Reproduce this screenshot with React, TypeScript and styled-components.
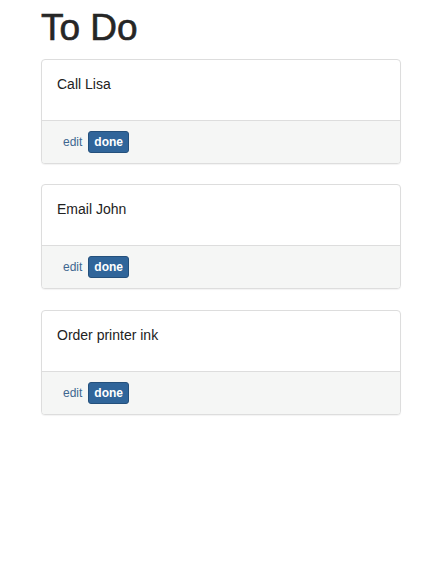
import styled, { createGlobalStyle } from "styled-components";

const GlobalStyle = createGlobalStyle`
  html, body {
    margin: 0;
    padding: 0;
    background: #ffffff;
    font-family: "Liberation Sans", Arial, sans-serif;
    font-size: 14px;
    line-height: 1.42857;
    color: #333333;
  }
`;

const Page = styled.div`
  padding: 0 45px 0 41px;
`;

const Title = styled.h1`
  font-size: 37px;
  font-weight: 400;
  line-height: 1.1;
  margin: 8px 0 10px;
  color: #262626;
  -webkit-text-stroke: 0.6px #262626;
`;

const Panel = styled.div`
  width: 360px;
  box-sizing: border-box;
  margin-bottom: 20.5px;
  background: #ffffff;
  border: 1px solid #dddddd;
  border-radius: 4px;
  box-shadow: 0 1px 1px rgba(0, 0, 0, 0.05);
`;

const PanelBody = styled.div`
  padding: 15px;
`;

const TaskText = styled.p`
  margin: 0 0 10px;
  color: #222222;
`;

const PanelFooter = styled.div`
  display: flex;
  align-items: center;
  padding: 10px 15px;
  background: #f5f6f5;
  border-top: 1px solid #dddddd;
  border-radius: 0 0 3px 3px;
`;

const Button = styled.button<{ $primary?: boolean }>`
  font-family: inherit;
  font-size: 12px;
  line-height: 18px;
  padding: 1px 5px;
  border-radius: 3px;
  cursor: pointer;
  border: 1px solid ${(p) => (p.$primary ? "#24507c" : "transparent")};
  background: ${(p) => (p.$primary ? "#30659a" : "transparent")};
  color: ${(p) => (p.$primary ? "#ffffff" : "#3e6790")};
  font-weight: ${(p) => (p.$primary ? 700 : 400)};
`;

const tasks = ["Call Lisa", "Email John", "Order printer ink"];

export default function App() {
  return (
    <>
      <GlobalStyle />
      <Page>
        <Title>To Do</Title>
        {tasks.map((task) => (
          <Panel key={task}>
            <PanelBody>
              <TaskText>{task}</TaskText>
            </PanelBody>
            <PanelFooter>
              <Button>edit</Button>
              <Button $primary>done</Button>
            </PanelFooter>
          </Panel>
        ))}
      </Page>
    </>
  );
}
